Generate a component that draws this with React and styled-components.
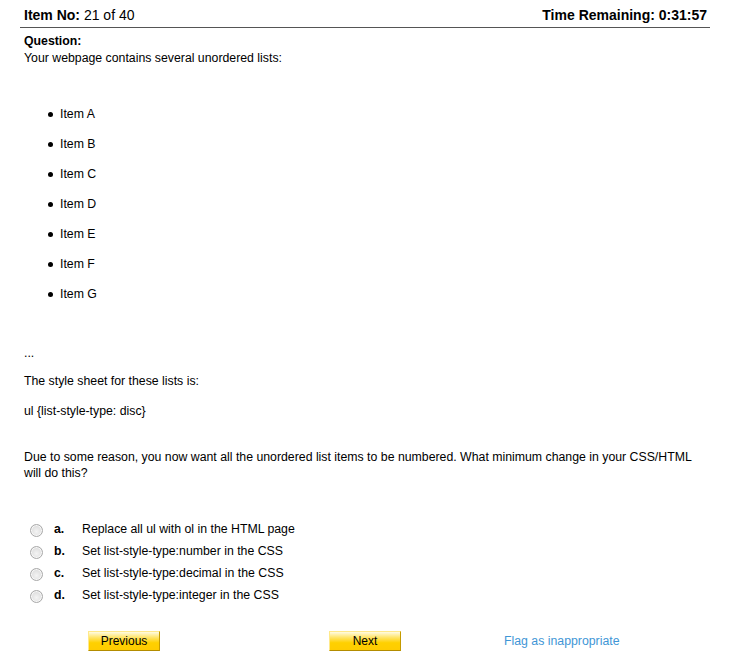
import React from "react";
import styled, { createGlobalStyle } from "styled-components";

const Global = createGlobalStyle`
  html, body { margin: 0; padding: 0; background: #fff; }
  body { font-family: "Liberation Sans", Arial, sans-serif; color: #000; }
`;

const Page = styled.div`
  width: 690px;
  margin-left: 20px;
`;

const Header = styled.div`
  display: flex;
  justify-content: space-between;
  align-items: flex-end;
  padding: 6px 3px 3px 4px;
  line-height: 18px;
  font-size: 14px;
  border-bottom: 1px solid #555;
`;

const Label = styled.b`
  font-weight: bold;
`;

const Content = styled.div`
  padding-left: 4px;
  width: 682px;
  font-size: 12.3px;
  line-height: 16px;
`;

const Heading = styled.div`
  font-weight: bold;
  margin-top: 5px;
`;

const Para = styled.p`
  margin: ${(p) => p.$top || 0}px 0 0 0;
`;

const List = styled.ul`
  list-style: none;
  margin: 40px 0 0 0;
  padding-left: 36px;
`;

const ListItem = styled.li`
  position: relative;
  margin-top: ${(p) => (p.$first ? 0 : 14)}px;
  &::before {
    content: "";
    position: absolute;
    left: -12px;
    top: 6px;
    width: 5px;
    height: 5px;
    border-radius: 50%;
    background: #000;
  }
`;

const Options = styled.div`
  margin-top: 37px;
  display: flex;
  flex-direction: column;
  font-size: 12.3px;
`;

const OptionRow = styled.label`
  display: flex;
  align-items: center;
  height: 22px;
  padding-left: 10px;
`;

const Radio = styled.span`
  box-sizing: border-box;
  flex: none;
  width: 13px;
  height: 13px;
  border-radius: 50%;
  border: 1px solid #a9a9a9;
  background: radial-gradient(circle at 50% 60%, #f4f4f4 0%, #e2e2e2 55%, #cfcfcf 100%);
  box-shadow: inset 0 0 0 1px #f8f8f8;
  margin-top: 2px;
`;

const Letter = styled.b`
  font-weight: bold;
  width: 28px;
  margin-left: 11px;
`;

const Footer = styled.div`
  display: flex;
  align-items: center;
  margin-top: 25px;
  padding-left: 68px;
`;

const YellowButton = styled.button`
  box-sizing: border-box;
  width: 72px;
  height: 20px;
  padding: 0;
  margin-left: ${(p) => p.$offset}px;
  font-family: "Liberation Sans", Arial, sans-serif;
  font-size: 12px;
  color: #000;
  background: linear-gradient(to bottom, #fffbe3 0%, #ffe56a 30%, #ffd000 60%, #ffcc00 100%);
  border-style: solid;
  border-width: 1px;
  border-color: #ffe98a #c49a00 #b38c00 #ffe98a;
  cursor: pointer;
`;

const FlagLink = styled.a`
  margin-left: 103px;
  font-size: 12.3px;
  color: #3f96d6;
  text-decoration: none;
`;

const items = ["Item A", "Item B", "Item C", "Item D", "Item E", "Item F", "Item G"];
const options = [
  ["a.", "Replace all ul with ol in the HTML page"],
  ["b.", "Set list-style-type:number in the CSS"],
  ["c.", "Set list-style-type:decimal in the CSS"],
  ["d.", "Set list-style-type:integer in the CSS"],
];

export default function App() {
  return (
    <>
      <Global />
      <Page>
        <Header>
          <span>
            <Label>Item No:</Label> 21 of 40
          </span>
          <Label>Time Remaining: 0:31:57</Label>
        </Header>
        <Content>
          <Heading>Question:</Heading>
          <Para $top={1}>Your webpage contains several unordered lists:</Para>
          <List>
            {items.map((it, i) => (
              <ListItem key={it} $first={i === 0}>
                {it}
              </ListItem>
            ))}
          </List>
          <Para $top={43}>...</Para>
          <Para $top={12}>The style sheet for these lists is:</Para>
          <Para $top={14}>ul {"{"}list-style-type: disc{"}"}</Para>
          <Para $top={30}>
            Due to some reason, you now want all the unordered list items to be numbered. What
            minimum change in your CSS/HTML will do this?
          </Para>
        </Content>
        <Options>
          {options.map(([l, t]) => (
            <OptionRow key={l}>
              <Radio />
              <Letter>{l}</Letter>
              <span>{t}</span>
            </OptionRow>
          ))}
        </Options>
        <Footer>
          <YellowButton $offset={0}>Previous</YellowButton>
          <YellowButton $offset={169}>Next</YellowButton>
          <FlagLink href="#">Flag as inappropriate</FlagLink>
        </Footer>
      </Page>
    </>
  );
}
